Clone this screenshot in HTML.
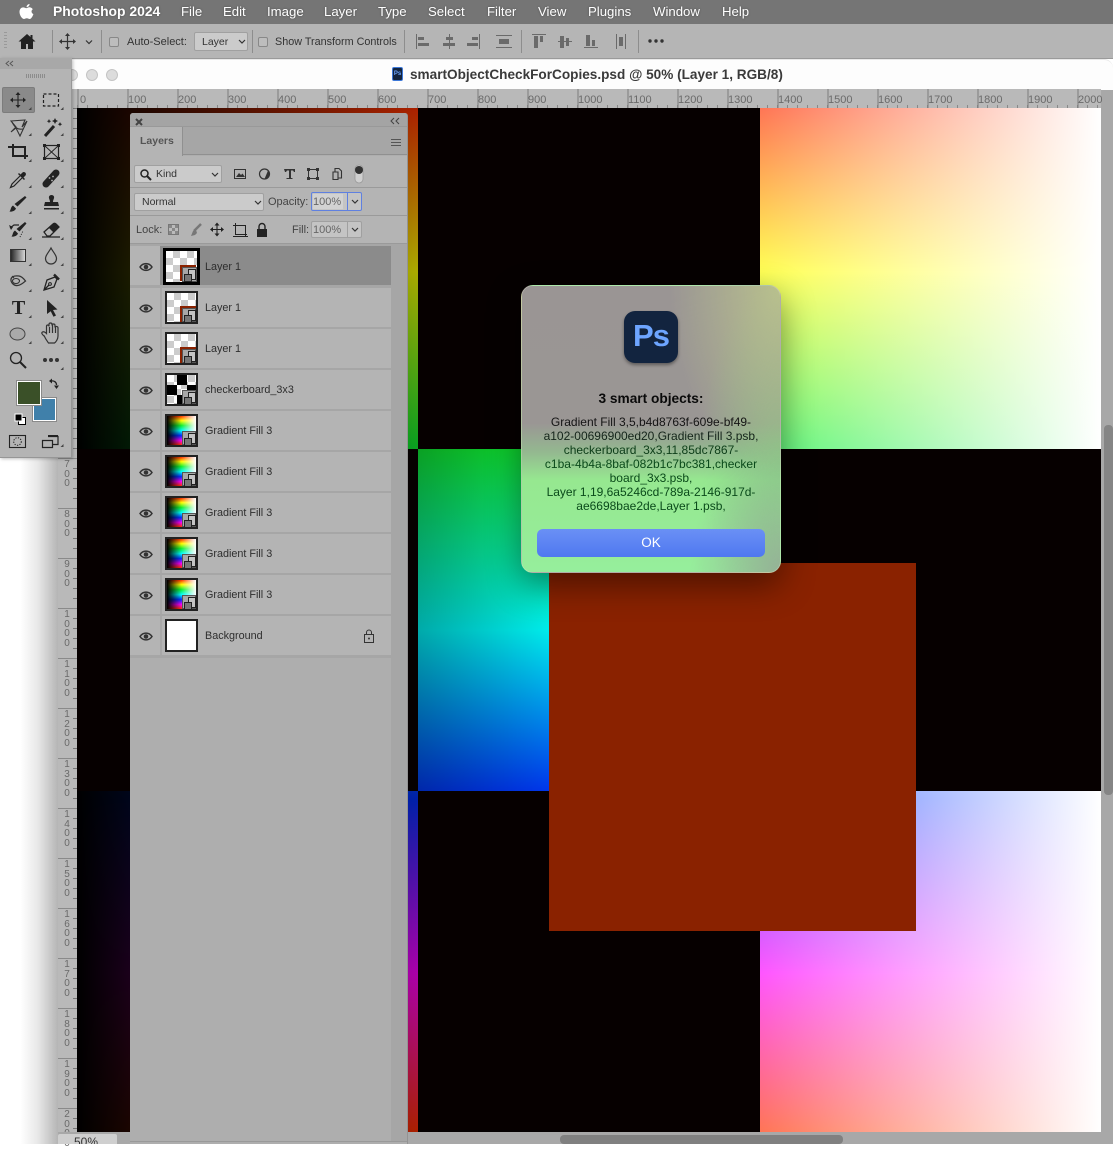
<!DOCTYPE html>
<html><head><meta charset="utf-8"><style>
*{box-sizing:border-box}
html,body{margin:0;padding:0;width:1113px;height:1144px;overflow:hidden;background:#fff;font-family:"Liberation Sans",sans-serif}
.a{position:absolute}
.m{position:absolute;top:4px;font-size:13.2px;line-height:15px;color:#fff;text-shadow:0 0 2px rgba(0,0,0,.35);white-space:nowrap}
.t{position:absolute;font-size:11px;line-height:12px;color:#333;white-space:nowrap}
.sep{position:absolute;top:30px;width:1px;height:23px;background:#8d8d8d}
.cb{position:absolute;width:10px;height:10px;border:1px solid #888;border-radius:2px;background:#bdbdbd}
.sel{position:absolute;background:#cbcbcb;border:1px solid #a0a0a0;border-radius:2px;font-size:10.5px;color:#333;white-space:nowrap}
.rt{position:absolute;top:94px;font-size:11px;line-height:13px;color:#6a6a6a;white-space:nowrap}
.rl{position:absolute;left:62px;width:10px;font-size:10px;line-height:9.7px;color:#6a6a6a;text-align:center;white-space:normal}
.mt{position:absolute;left:58px;width:19px;height:1px;background:#8a8a8a}
.row{position:absolute;left:130px;width:261px;height:39px;background:#b4b4b4}
.rsep{position:absolute;left:160px;width:2px;height:39px;background:#a8a8a8}
.th{position:absolute;left:165px;width:33px;height:33px;border:2px solid #222;overflow:hidden;background-color:#fff}
.ck{background-image:conic-gradient(#ccc 25%,#fff 0 50%,#ccc 0 75%,#fff 0);background-size:14px 14px}
.gr{background:linear-gradient(90deg,#000,rgba(0,0,0,0) 50%,rgba(255,255,255,0) 50%,#fff),linear-gradient(180deg,#ff3000,#ff0 16%,#10f030 33%,#0ff 51%,#0030ff 67.5%,#f0f 84.5%,#ff3000)}
.rd{position:absolute;left:13px;top:13px;width:16px;height:16px;background:#8a2200}
.bd{position:absolute;left:15px;top:15px;width:14px;height:14px;background:#a8a8a8;border:1px solid #555}
.bd:before{content:"";position:absolute;left:5px;top:1px;width:6px;height:9px;border:1px solid #222;background:#c4c4c4}
.bd:after{content:"";position:absolute;left:1px;top:6px;width:6px;height:6px;border:1px solid #222;background:#777}
.nm{position:absolute;left:205px;font-size:10.8px;line-height:12px;color:#2e2e2e;white-space:nowrap}
.dl{text-align:center;white-space:nowrap;font-size:12px;line-height:14px;height:14px}
</style></head><body>

<!-- left white area -->
<div class="a" style="left:0;top:458px;width:58px;height:686px;background:linear-gradient(90deg,#fff 0,#fff 35%,#e8e8e8 65%,#b5b5b5 100%)"></div>

<!-- canvas -->
<div class="a" style="left:77px;top:108px;width:1024px;height:1024px;background:linear-gradient(90deg,#000,rgba(0,0,0,0) 50%,rgba(255,255,255,0) 50%,#fff),linear-gradient(180deg,#ff3000,#ff0 16%,#10f030 33%,#0ff 51%,#0030ff 67.5%,#f0f 84.5%,#ff3000)"></div>
<div class="a" style="left:418px;top:108px;width:342px;height:341px;background:#060000"></div>
<div class="a" style="left:77px;top:449px;width:341px;height:342px;background:#060000"></div>
<div class="a" style="left:760px;top:449px;width:341px;height:342px;background:#060000"></div>
<div class="a" style="left:418px;top:791px;width:342px;height:341px;background:#060000"></div>
<div class="a" style="left:549px;top:563px;width:367px;height:368px;background:#8a2200"></div>

<!-- left ruler -->
<div class="a" style="left:58px;top:108px;width:19px;height:1024px;background-color:#b9b9b9;background-image:repeating-linear-gradient(180deg,#777 0,#777 1px,transparent 1px,transparent 10px);background-size:4px 100%;background-repeat:no-repeat;background-position:right top"></div>
<div class="mt" style="top:458px"></div><div class="mt" style="top:508px"></div><div class="mt" style="top:558px"></div><div class="mt" style="top:608px"></div><div class="mt" style="top:658px"></div><div class="mt" style="top:708px"></div><div class="mt" style="top:758px"></div><div class="mt" style="top:808px"></div><div class="mt" style="top:858px"></div><div class="mt" style="top:908px"></div><div class="mt" style="top:958px"></div><div class="mt" style="top:1008px"></div><div class="mt" style="top:1058px"></div><div class="mt" style="top:1108px"></div>
<div class="rl" style="top:460px">7<br>0<br>0</div>
<div class="rl" style="top:510px">8<br>0<br>0</div>
<div class="rl" style="top:560px">9<br>0<br>0</div>
<div class="rl" style="top:610px">1<br>0<br>0<br>0</div>
<div class="rl" style="top:660px">1<br>1<br>0<br>0</div>
<div class="rl" style="top:710px">1<br>2<br>0<br>0</div>
<div class="rl" style="top:760px">1<br>3<br>0<br>0</div>
<div class="rl" style="top:810px">1<br>4<br>0<br>0</div>
<div class="rl" style="top:860px">1<br>5<br>0<br>0</div>
<div class="rl" style="top:910px">1<br>6<br>0<br>0</div>
<div class="rl" style="top:960px">1<br>7<br>0<br>0</div>
<div class="rl" style="top:1010px">1<br>8<br>0<br>0</div>
<div class="rl" style="top:1060px">1<br>9<br>0<br>0</div>
<div class="rl" style="top:1110px">2<br>0<br>0<br>0</div>

<!-- scrollbars -->
<div class="a" style="left:1101px;top:90px;width:12px;height:1054px;background:#a8a8a8"></div>
<div class="a" style="left:1104px;top:425px;width:9px;height:370px;background:#858585;border-radius:4px"></div>
<div class="a" style="left:58px;top:1132px;width:1055px;height:12px;background:#a8a8a8"></div>
<div class="a" style="left:560px;top:1135px;width:283px;height:9px;background:#808080;border-radius:4px"></div>
<div class="a" style="left:58px;top:1134px;width:59px;height:10px;background:#cfcfcf;border-radius:2px 2px 0 0;overflow:hidden"><div class="a" style="left:16px;top:1px;font-size:12px;line-height:14px;color:#333">50%</div></div>

<!-- title bar -->
<div class="a" style="left:57px;top:59px;width:1056px;height:31px;background:#fdfdfd;border-top:1px solid #e8e8e8;border-radius:0 9px 0 0"></div>
<div class="a" style="left:66px;top:69px;width:12px;height:12px;border-radius:50%;background:#dcdcdc;border:1px solid #c4c4c4"></div>
<div class="a" style="left:86px;top:69px;width:12px;height:12px;border-radius:50%;background:#dcdcdc;border:1px solid #c4c4c4"></div>
<div class="a" style="left:106px;top:69px;width:12px;height:12px;border-radius:50%;background:#dcdcdc;border:1px solid #c4c4c4"></div>
<div class="a" style="left:392px;top:67px;width:11px;height:14px;background:#12243f;border:1px solid #3d78d8;border-radius:2px;color:#6da5ff;font-size:6px;line-height:12px;font-weight:bold;text-align:center">Ps</div>
<div class="a" style="left:410px;top:67px;font-size:13.6px;line-height:16px;font-weight:bold;color:#3a3a3a;white-space:nowrap">smartObjectCheckForCopies.psd @ 50% (Layer 1, RGB/8)</div>

<!-- top ruler -->
<div class="a" style="left:57px;top:89px;width:1044px;height:19px;background-color:#b9b9b9;background-image:repeating-linear-gradient(90deg,#888 0,#888 1px,transparent 1px,transparent 10px);background-size:100% 3px;background-repeat:no-repeat;background-position:20px bottom"></div>
<svg class="a" style="left:57px;top:89px" width="1044" height="19"><path stroke="#7d7d7d" stroke-width="1" d="M21 0V19M71 0V19M121 0V19M171 0V19M221 0V19M271 0V19M321 0V19M371 0V19M421 0V19M471 0V19M521 0V19M571 0V19M621 0V19M671 0V19M721 0V19M771 0V19M821 0V19M871 0V19M921 0V19M971 0V19M1021 0V19"/></svg>
<span class="rt" style="left:80px">0</span><span class="rt" style="left:128px">100</span><span class="rt" style="left:178px">200</span><span class="rt" style="left:228px">300</span><span class="rt" style="left:278px">400</span><span class="rt" style="left:328px">500</span><span class="rt" style="left:378px">600</span><span class="rt" style="left:428px">700</span><span class="rt" style="left:478px">800</span><span class="rt" style="left:528px">900</span><span class="rt" style="left:578px">1000</span><span class="rt" style="left:628px">1100</span><span class="rt" style="left:678px">1200</span><span class="rt" style="left:728px">1300</span><span class="rt" style="left:778px">1400</span><span class="rt" style="left:828px">1500</span><span class="rt" style="left:878px">1600</span><span class="rt" style="left:928px">1700</span><span class="rt" style="left:978px">1800</span><span class="rt" style="left:1028px">1900</span><span class="rt" style="left:1078px">2000</span>

<!-- menu bar -->
<div class="a" style="left:0;top:0;width:1113px;height:24px;background:#757575"></div>
<svg class="a" style="left:18px;top:3px" width="17" height="18" viewBox="0 0 17 18"><path fill="#fff" d="M11.6 1c.1 1.300-1.200 3.200-3 3.100C8.400 2.600 9.900 1 11.600 1zM14.800 6.300c-1.900 1.200-1.600 3.900.6 4.800-.5 1.500-2 4.900-3.800 4.900-1 0-1.500-.7-2.800-.7s-1.900.7-2.900.7C3.900 16 1.500 12 1.500 8.900c0-2.900 1.900-4.500 3.700-4.500 1.200 0 2.200.8 3 .8s1.900-.9 3.300-.9c1 0 2.300.5 3.300 2z"/></svg>
<div class="m" style="left:53px;font-weight:bold;font-size:13.9px">Photoshop 2024</div>
<div class="m" style="left:181px">File</div><div class="m" style="left:223px">Edit</div><div class="m" style="left:267px">Image</div><div class="m" style="left:324px">Layer</div><div class="m" style="left:378px">Type</div><div class="m" style="left:428px">Select</div><div class="m" style="left:487px">Filter</div><div class="m" style="left:538px">View</div><div class="m" style="left:588px">Plugins</div><div class="m" style="left:653px">Window</div><div class="m" style="left:722px">Help</div>

<!-- options bar -->
<div class="a" style="left:0;top:24px;width:1113px;height:35px;background:#b5b5b5;border-bottom:1px solid #9a9a9a"></div>
<svg class="a" style="left:0;top:24px" width="1113" height="35" viewBox="0 24 1113 35">
<path fill="#222" d="M27 34l-8.500 7.500h2.500V49h5v-5h2v5h5v-7.500h2.500l-3-2.700V35h-2v2z"/>
<path fill="none" stroke="#333" stroke-width="1.200" d="M60 41.500H75M67.500 34V49"/><path fill="#333" d="M67.500 33l-2.500 3h5zM67.500 50l-2.500-3h5zM59 41.500l3-2.500v5zM76 41.500l-3-2.500v5z"/>
<path fill="none" stroke="#333" stroke-width="1.200" d="M86 40.500l3 3 3-3"/>
<g fill="#999"><rect x="4" y="32" width="3" height="1"/><rect x="4" y="35" width="3" height="1"/><rect x="4" y="38" width="3" height="1"/><rect x="4" y="41" width="3" height="1"/><rect x="4" y="44" width="3" height="1"/><rect x="4" y="47" width="3" height="1"/></g>
<g fill="#6a6a6a">
<rect x="416" y="34" width="1" height="15"/><rect x="418" y="37" width="6" height="3"/><rect x="418" y="43" width="11" height="3"/>
<rect x="449" y="34" width="1" height="15"/><rect x="446" y="37" width="7" height="3"/><rect x="443" y="43" width="12" height="3"/>
<rect x="479" y="34" width="1" height="15"/><rect x="472" y="37" width="6" height="3"/><rect x="467" y="43" width="11" height="3"/>
<rect x="496" y="35" width="16" height="1"/><rect x="496" y="47" width="16" height="1"/><rect x="499" y="39" width="10" height="5"/>
<rect x="532" y="34" width="14" height="1"/><rect x="534" y="36" width="4" height="12"/><rect x="540" y="36" width="3" height="6"/>
<rect x="558" y="41" width="14" height="1"/><rect x="560" y="36" width="4" height="12"/><rect x="566" y="38" width="3" height="8"/>
<rect x="584" y="47" width="14" height="1"/><rect x="586" y="35" width="4" height="11"/><rect x="592" y="40" width="3" height="6"/>
<rect x="616" y="34" width="1" height="15"/><rect x="625" y="34" width="1" height="15"/><rect x="619" y="37" width="4" height="9"/>
</g>
<g fill="#333"><circle cx="650" cy="41" r="1.700"/><circle cx="656" cy="41" r="1.700"/><circle cx="662" cy="41" r="1.700"/></g>
</svg>
<div class="sep" style="left:52px"></div><div class="sep" style="left:101px"></div><div class="sep" style="left:252px"></div><div class="sep" style="left:404px"></div><div class="sep" style="left:521px"></div><div class="sep" style="left:638px"></div>
<div class="cb" style="left:109px;top:37px"></div>
<div class="t" style="left:127px;top:36px">Auto-Select:</div>
<div class="sel" style="left:194px;top:32px;width:54px;height:19px;padding:3px 0 0 7px;line-height:12px">Layer<svg class="a" style="left:43px;top:6px" width="8" height="6"><path fill="none" stroke="#333" stroke-width="1.200" d="M1 1l3 3 3-3"/></svg></div>
<div class="cb" style="left:258px;top:37px"></div>
<div class="t" style="left:275px;top:36px;font-size:10.8px">Show Transform Controls</div>

<!-- layers panel -->
<div class="a" style="left:130px;top:113px;width:278px;height:1031px;background:#aeaeae;border-right:1px solid #939393;border-radius:3px 3px 0 0"></div>
<div class="a" style="left:130px;top:1141px;width:277px;height:1px;background:#999"></div>
<div class="a" style="left:130px;top:113px;width:277px;height:14px;background:#a4a4a4;border-radius:3px 3px 0 0;border-bottom:1px solid #999"></div>
<div class="a" style="left:130px;top:127px;width:277px;height:28px;background:#a6a6a6;border-bottom:1px solid #909090"></div>
<div class="a" style="left:130px;top:127px;width:53px;height:29px;background:#b4b4b4;border-right:1px solid #909090"></div>
<div class="a" style="left:140px;top:135px;font-size:10.5px;line-height:13px;font-weight:bold;color:#555">Layers</div>
<svg class="a" style="left:130px;top:113px" width="277" height="43"><path stroke="#444" stroke-width="2" d="M6 6l6 6M12 6l-6 6"/><path fill="none" stroke="#444" stroke-width="1" d="M264 5l-3 3 3 3M269 5l-3 3 3 3"/><path stroke="#555" d="M261 26.500h10M261 29.500h10M261 32.500h10"/></svg>
<div class="a" style="left:130px;top:156px;width:277px;height:32px;background:#b4b4b4;border-bottom:1px solid #9a9a9a"></div>
<div class="a" style="left:130px;top:188px;width:277px;height:28px;background:#b4b4b4;border-bottom:1px solid #9a9a9a"></div>
<div class="a" style="left:130px;top:216px;width:277px;height:28px;background:#b4b4b4;border-bottom:1px solid #9a9a9a"></div>
<div class="a" style="left:391px;top:244px;width:16px;height:897px;background:#a6a6a6"></div>
<div class="a" style="left:130px;top:244px;width:261px;height:414px;background:#a6a6a6"></div>

<div class="sel" style="left:134px;top:165px;width:88px;height:18px;line-height:17px;padding-left:21px;font-size:10.5px">Kind<svg class="a" style="left:4px;top:2px" width="14" height="13"><circle cx="5.500" cy="5.500" r="3.500" fill="none" stroke="#222" stroke-width="1.500"/><path stroke="#222" stroke-width="2" d="M8 8l4 4"/></svg><svg class="a" style="left:76px;top:6px" width="8" height="6"><path fill="none" stroke="#333" stroke-width="1.200" d="M1 1l3 3 3-3"/></svg></div>
<svg class="a" style="left:230px;top:163px" width="140" height="24">
<rect x="4.500" y="6.500" width="11" height="9" fill="none" stroke="#333"/><path fill="#333" d="M6 14l3-4 2 2 1.500-1.500L15 14z"/>
<circle cx="34.500" cy="11" r="5" fill="none" stroke="#333" stroke-width="1.200"/><path fill="#333" d="M34.500 16a5 5 0 0 0 3.500-8.500z"/>
<path fill="#333" d="M54 6h11v3h-1l-1-1.500h-2V15h1.500v1h-6v-1H59V7.500h-2L56 9h-1z"/>
<rect x="78.500" y="6.500" width="9" height="9" fill="none" stroke="#333"/><g fill="#333"><rect x="77" y="5" width="3" height="3"/><rect x="86" y="5" width="3" height="3"/><rect x="77" y="14" width="3" height="3"/><rect x="86" y="14" width="3" height="3"/></g>
<path fill="none" stroke="#333" stroke-width="1.100" d="M105 9V5.500h4l2.500 2.500v7H108M103 9h5v7.500h-5z"/>
<rect x="125" y="2" width="8" height="18" rx="4" fill="#d0d0d0" stroke="#999" stroke-width=".8"/><circle cx="129" cy="7" r="4" fill="#333"/>
</svg>

<div class="sel" style="left:134px;top:193px;width:130px;height:18px;line-height:16px;padding-left:7px;font-size:10.5px">Normal<svg class="a" style="left:119px;top:6px" width="8" height="6"><path fill="none" stroke="#333" stroke-width="1.200" d="M1 1l3 3 3-3"/></svg></div>
<div class="t" style="left:268px;top:196px;color:#444">Opacity:</div>
<div class="a" style="left:311px;top:192px;width:51px;height:19px;border:1px solid #5f80e0;border-radius:2px;background:#c4c4c4"></div>
<div class="a" style="left:313px;top:194px;width:30px;height:15px;background:#d2d2d2;font-size:11px;line-height:16px;color:#666;white-space:nowrap">100%</div>
<div class="a" style="left:347px;top:192px;width:1px;height:19px;background:#5f80e0"></div>
<svg class="a" style="left:351px;top:199px" width="8" height="6"><path fill="none" stroke="#333" stroke-width="1.200" d="M1 1l3 3 3-3"/></svg>

<div class="t" style="left:136px;top:224px;color:#444">Lock:</div>
<svg class="a" style="left:165px;top:220px" width="110" height="20">
<rect x="3.500" y="4.500" width="10" height="10" fill="#bbb" stroke="#777"/><path fill="#888" d="M4 5h3v3H4zM10 5h3v3h-3zM7 8h3v3H7zM4 11h3v3H4zM10 11h3v3h-3z"/>
<path stroke="#777" stroke-width="2.500" d="M36 4l-7 7"/><path fill="#777" d="M31 10l-3 1-2 5 4-1 2-2z"/>
<g transform="translate(52,9.500)"><path fill="none" stroke="#222" stroke-width="1.100" d="M-6 0H6M0-6V6"/><path fill="#222" d="M0-7l-2.500 3h5zM0 7l-2.500-3h5zM-7 0l3-2.500v5zM7 0l-3-2.500v5z"/></g>
<rect x="70.500" y="5.500" width="10" height="9" fill="none" stroke="#222"/><path stroke="#222" stroke-dasharray="2 1.500" d="M68 5.500h3M80 14.500h3M70.500 3v3M80.500 14v3"/><path stroke="#222" d="M68 16.500h15"/>
<path fill="#222" d="M92 9h10v8H92z"/><path fill="none" stroke="#222" stroke-width="1.400" d="M94 9V6.500a3 3 0 0 1 6 0V9"/>
</svg>
<div class="t" style="left:292px;top:224px;color:#444">Fill:</div>
<div class="a" style="left:311px;top:221px;width:51px;height:17px;border:1px solid #a0a0a0;border-radius:2px;background:#c4c4c4"></div>
<div class="a" style="left:313px;top:224px;font-size:11px;line-height:13px;color:#666">100%</div>
<div class="a" style="left:347px;top:221px;width:1px;height:17px;background:#a0a0a0"></div>
<svg class="a" style="left:351px;top:227px" width="8" height="6"><path fill="none" stroke="#333" stroke-width="1.200" d="M1 1l3 3 3-3"/></svg>

<!-- rows -->
<div class="row" style="top:246px;background:#8b8b8b"></div>
<div class="a" style="left:130px;top:246px;width:30px;height:39px;background:#b4b4b4"></div>
<div class="row" style="top:288px;height:39px"></div><div class="row" style="top:329px"></div><div class="row" style="top:370px"></div><div class="row" style="top:411px"></div><div class="row" style="top:452px"></div><div class="row" style="top:493px"></div><div class="row" style="top:534px"></div><div class="row" style="top:575px"></div><div class="row" style="top:616px"></div>
<div class="rsep" style="top:288px"></div><div class="rsep" style="top:329px"></div><div class="rsep" style="top:370px"></div><div class="rsep" style="top:411px"></div><div class="rsep" style="top:452px"></div><div class="rsep" style="top:493px"></div><div class="rsep" style="top:534px"></div><div class="rsep" style="top:575px"></div><div class="rsep" style="top:616px"></div>

<svg class="a" style="left:130px;top:246px" width="32" height="420">
<defs><g id="eye"><path fill="none" stroke="#333" stroke-width="1.500" d="M-6 0C-3-4.500 3-4.500 6 0 3 4.500-3 4.500-6 0z"/><circle r="2.300" fill="#333"/></g></defs>
<use href="#eye" x="16" y="21"/><use href="#eye" x="16" y="62.500"/><use href="#eye" x="16" y="103.500"/><use href="#eye" x="16" y="144.500"/><use href="#eye" x="16" y="185.500"/><use href="#eye" x="16" y="226.500"/><use href="#eye" x="16" y="267.500"/><use href="#eye" x="16" y="308.500"/><use href="#eye" x="16" y="349.500"/><use href="#eye" x="16" y="390.500"/>
</svg>

<div class="th ck" style="left:163px;top:248px;width:37px;height:37px;border:3px solid #000"><div class="rd" style="left:14px;top:14px"></div><div class="bd" style="left:16px;top:16px;width:15px;height:15px"></div></div>
<div class="th ck" style="top:291px"><div class="rd"></div><div class="bd"></div></div>
<div class="th ck" style="top:332px"><div class="rd"></div><div class="bd"></div></div>
<div class="th ck" style="top:373px"><div class="a" style="left:10px;top:0;width:10px;height:10px;background:#000"></div><div class="a" style="left:0;top:10px;width:10px;height:10px;background:#000"></div><div class="a" style="left:20px;top:10px;width:10px;height:10px;background:#000"></div><div class="a" style="left:10px;top:20px;width:10px;height:10px;background:#000"></div><div class="bd"></div></div>
<div class="th gr" style="top:414px"><div class="bd"></div></div>
<div class="th gr" style="top:455px"><div class="bd"></div></div>
<div class="th gr" style="top:496px"><div class="bd"></div></div>
<div class="th gr" style="top:537px"><div class="bd"></div></div>
<div class="th gr" style="top:578px"><div class="bd"></div></div>
<div class="th" style="top:619px"></div>

<div class="nm" style="top:261px">Layer 1</div><div class="nm" style="top:302px">Layer 1</div><div class="nm" style="top:343px">Layer 1</div><div class="nm" style="top:384px">checkerboard_3x3</div><div class="nm" style="top:425px">Gradient Fill 3</div><div class="nm" style="top:466px">Gradient Fill 3</div><div class="nm" style="top:507px">Gradient Fill 3</div><div class="nm" style="top:548px">Gradient Fill 3</div><div class="nm" style="top:589px">Gradient Fill 3</div><div class="nm" style="top:630px">Background</div>
<svg class="a" style="left:362px;top:629px" width="14" height="15"><rect x="2.500" y="5.500" width="9" height="8" fill="none" stroke="#333"/><path fill="none" stroke="#333" d="M4.500 5.500V3.500a2.500 2.500 0 0 1 5 0v2"/><circle cx="7" cy="9.500" r="1" fill="#333"/></svg>

<!-- toolbox -->
<div class="a" style="left:0;top:58px;width:72px;height:400px;background:#b4b4b4;border-right:1px solid #969696;border-bottom:1px solid #969696;box-shadow:1px 1px 3px rgba(0,0,0,.25)"></div>
<div class="a" style="left:0;top:58px;width:72px;height:11px;background:#a8a8a8"></div>
<div class="a" style="left:2px;top:87px;width:33px;height:26px;background:#8a8a8a;border:1px solid #7c7c7c;border-radius:2px"></div>
<svg class="a" style="left:0;top:58px" width="72" height="400" viewBox="0 58 72 400">
<path fill="none" stroke="#555" stroke-width=".9" d="M9 61l-3 2.500L9 66M13 61l-3 2.500L13 66"/>
<path stroke="#8c8c8c" stroke-width="4" stroke-dasharray="1 1" d="M26 76h19"/>
<g fill="#444" transform="translate(-1.500,-2)"><path d="M33 112v-3l-3 3zM65 112v-3l-3 3zM33 138v-3l-3 3zM65 138v-3l-3 3zM33 164v-3l-3 3zM65 164v-3l-3 3zM33 190v-3l-3 3zM65 190v-3l-3 3zM33 216v-3l-3 3zM65 216v-3l-3 3zM33 242v-3l-3 3zM65 242v-3l-3 3zM33 268v-3l-3 3zM65 268v-3l-3 3zM33 294v-3l-3 3zM65 294v-3l-3 3zM33 320v-3l-3 3zM65 320v-3l-3 3zM33 346v-3l-3 3zM65 346v-3l-3 3zM65 372v-3l-3 3zM65 449v-3l-3 3z"/></g>
<!-- move -->
<path fill="none" stroke="#222" stroke-width="1.100" d="M11 100H25M18 93V107"/><path fill="#222" d="M18 92l-2.500 3h5zM18 108l-2.500-3h5zM10 100l3-2.500v5zM26 100l-3-2.500v5z"/>
<!-- marquee -->
<rect x="43.500" y="94" width="15" height="12" fill="none" stroke="#222" stroke-width="1.200" stroke-dasharray="3 2"/>
<!-- lasso -->
<path fill="none" stroke="#333" stroke-width="1.100" d="M11 121l14-1-3 7 5-6-7 15-4-8-5 4 5-5z"/><path fill="none" stroke="#333" stroke-width="1.100" d="M12 122c3 6 6 8 11 7"/>
<!-- wand -->
<path stroke="#222" stroke-width="3" d="M45 136l9-10"/><path fill="#222" d="M55 118l1 2 2 1-2 1-1 2-1-2-2-1 2-1zM60 122l.7 1.500 1.500.7-1.500.7-.7 1.500-.7-1.500-1.500-.7 1.500-.7zM49 119l.7 1.500 1.500.7-1.500.7-.7 1.500-.7-1.500-1.500-.7 1.500-.7z"/>
<!-- crop -->
<path fill="none" stroke="#222" stroke-width="2" d="M8 147h17v12M13 144v12h15"/>
<!-- frame -->
<rect x="44.500" y="145.500" width="14" height="13" fill="none" stroke="#222" stroke-width="1.200"/><path stroke="#222" stroke-width=".9" d="M44.500 145.500l14 13M58.500 145.500l-14 13"/><g fill="#222"><rect x="43" y="144" width="3" height="3"/><rect x="57" y="144" width="3" height="3"/><rect x="43" y="157" width="3" height="3"/><rect x="57" y="157" width="3" height="3"/></g>
<!-- eyedropper -->
<path fill="none" stroke="#222" stroke-width="1.200" d="M20 176l-8 8-1.500 3.500 3.500-1.500 8-8"/><path fill="#222" d="M18 174l6 6 1-1-1.500-1.500 2-2c1.500-2-1-4.500-3-3l-2 2-1.500-1.500z"/>
<!-- bandage -->
<path stroke="#222" stroke-width="7" stroke-linecap="round" d="M46 184l10-11"/><g fill="#b4b4b4"><circle cx="49.500" cy="178" r=".9"/><circle cx="52" cy="180.500" r=".9"/><circle cx="53" cy="176.500" r=".9"/></g>
<!-- brush -->
<path fill="#222" d="M25 196l1.500 1.500-9 9-3-2.500zM13 205.500l3 3c-1 2.500-4 3.500-6.500 3 1.500-1.500 1-4.500 3.500-6z"/>
<!-- stamp -->
<path fill="#222" d="M49 196.500a2.800 2.800 0 0 1 5 0c.5 2-1 3-1 5.500h5l1 4H44l1-4h5c0-2.500-1.500-3.500-1-5.500zM44 208h15v1.500H44z"/>
<!-- history brush -->
<path fill="#222" d="M25 222l1.500 1.500-7 8-3-2.500zM15 230.500l3 3c-1 2.500-4 3.500-6.500 3 1.500-1.500 1-4.500 3.500-6z"/><path fill="none" stroke="#222" stroke-width="1.200" d="M10 228l4-3h5"/><path fill="#222" d="M9 225l2 5 2-3z"/><path stroke="#222" stroke-dasharray="1 1.500" d="M20 237l3-6"/>
<!-- eraser -->
<path fill="none" stroke="#222" stroke-width="1.300" d="M44 232l9-8c1-1 2-1 3 0l3 3-9 9h-3zM42 237h18"/><path fill="#222" d="M49 228l4.500 4.500 5.500-5.500-3-3c-1-1-2-1-3 0z"/>
<!-- gradient -->
<defs><linearGradient id="tg"><stop offset="0" stop-color="#222"/><stop offset="1" stop-color="#ddd"/></linearGradient></defs>
<rect x="10.500" y="249.500" width="15" height="12" fill="url(#tg)" stroke="#333"/>
<!-- drop -->
<path fill="none" stroke="#333" stroke-width="1.200" d="M51 248c-2 4-5.500 7-5.500 10.500a5.500 5.500 0 0 0 11 0c0-3.500-3.500-6.500-5.500-10.500z"/>
<!-- smudge/spot -->
<path fill="none" stroke="#333" stroke-width="1.300" d="M11 279c1-3 4-3.500 8-3 3 .5 5 3 6.500 5-2 1.500-4 4-8 4.500-3.500.5-7-3-6.500-6.500z"/><ellipse cx="16" cy="281" rx="3.500" ry="2.500" fill="none" stroke="#333" stroke-width="1.100"/><path stroke="#333" d="M12 276l2 2"/>
<!-- pen -->
<path fill="none" stroke="#222" stroke-width="1.300" d="M55 277l-8 3-3 10 10-3 3-8zM44 290l5-5"/><circle cx="50" cy="284" r="1.400" fill="none" stroke="#222"/><path stroke="#222" stroke-width="2.400" d="M54 274.500l5 5"/>
<!-- T -->
<text x="18.500" y="314" text-anchor="middle" font-family="Liberation Serif" font-weight="bold" font-size="20" fill="#222">T</text>
<!-- arrow -->
<path fill="#222" d="M47 300l10.500 9.500-4.500.5 3 5.500-2.500 1.200-2.800-5.500L47 314z"/>
<!-- ellipse -->
<ellipse cx="17.500" cy="334" rx="7.500" ry="6" fill="#aaa" stroke="#444"/>
<!-- hand -->
<path fill="none" stroke="#333" stroke-width="1.200" d="M44 336c-2-2-3-3-1.500-4 1.500-1 3 .5 4 1.500v-7c0-2 2.500-2 2.500 0v-2c0-2 3-2 3 0v1c0-2 3-2 3 0v2c0-1.500 3-1.500 3 .5v8c0 3-2 6-3.500 7h-6c-1-1.500-2.500-3-4.500-7.500zM49.500 327v6M52.500 325v8M55.500 326v7"/>
<!-- zoom -->
<circle cx="16" cy="358" r="5.500" fill="none" stroke="#222" stroke-width="1.300"/><path stroke="#222" stroke-width="2" d="M20 362l6 6"/>
<!-- dots -->
<g fill="#333"><circle cx="45" cy="360" r="2"/><circle cx="51" cy="360" r="2"/><circle cx="57" cy="360" r="2"/></g>
<!-- swap -->
<path fill="none" stroke="#222" stroke-width="1.300" d="M51 381c3-.5 5.500 1 5.500 4"/><path fill="#222" d="M49 381l3-2.500v5zM56.500 389l-2.500-3.500h5z"/>
<!-- default colours -->
<rect x="18.500" y="417.500" width="7" height="7" fill="#fff" stroke="#000"/><rect x="15" y="414" width="7" height="7" fill="#000" stroke="#fff"/>
<!-- quick mask -->
<rect x="9.500" y="435.500" width="16" height="12" fill="none" stroke="#222" stroke-width="1.100"/><circle cx="17.500" cy="441.500" r="3.800" fill="none" stroke="#222" stroke-dasharray="1.300 1.300"/>
<!-- screen mode -->
<path fill="none" stroke="#222" stroke-width="1.200" d="M48 436.500h10v8h-5M42.500 440.500h10v7h-10z"/><path stroke="#222" stroke-width="2" d="M48 436h10"/>
</svg>
<div class="a" style="left:32px;top:397px;width:25px;height:25px;background:#4080aa;border:1px solid #8a8a8a;box-shadow:inset 0 0 0 1px #fff"></div>
<div class="a" style="left:16px;top:380px;width:26px;height:26px;background:#3a5028;border:1px solid #8a8a8a;box-shadow:inset 0 0 0 1px #fff"></div>

<!-- dialog -->
<div class="a" style="left:521px;top:285px;width:260px;height:288px;border-radius:12px;overflow:hidden;border:1px solid rgba(220,220,200,.35);box-shadow:0 12px 34px rgba(0,0,0,.45);background:radial-gradient(110px 190px at 100% 0%,rgba(190,200,140,.85),rgba(190,200,140,0)),radial-gradient(90px 130px at 100% 100%,rgba(150,165,150,.8),rgba(150,165,150,0)),radial-gradient(80px 180px at 100% 60%,rgba(130,200,130,.6),rgba(130,200,130,0)),linear-gradient(180deg,#9a9594 0,#9a9694 48%,#94b890 58%,#96e890 68%,#96ee9c 100%)">
<div class="a" style="left:102px;top:25px;width:54px;height:52px;background:#12243f;border-radius:11px;box-shadow:0 2px 3px rgba(0,0,0,.4);color:#6da5ff;font-size:31px;letter-spacing:-1px;line-height:50px;font-weight:bold;text-align:center">Ps</div>
<div class="a" style="left:0;top:105px;width:258px;text-align:center;font-size:13.7px;line-height:15px;font-weight:bold;color:#0a0a0a;white-space:nowrap">3 smart objects:</div>
<div class="a" style="left:0;top:129px;width:258px">
<div class="dl" style="color:#141414">Gradient Fill 3,5,b4d8763f-609e-bf49-</div>
<div class="dl" style="color:#14241a">a102-00696900ed20,Gradient Fill 3.psb,</div>
<div class="dl" style="color:#0c3d18">checkerboard_3x3,11,85dc7867-</div>
<div class="dl" style="color:#0a4a1a">c1ba-4b4a-8baf-082b1c7bc381,checker</div>
<div class="dl" style="color:#0a4a1a">board_3x3.psb,</div>
<div class="dl" style="color:#0a4a1a">Layer 1,19,6a5246cd-789a-2146-917d-</div>
<div class="dl" style="color:#0a4a1a">ae6698bae2de,Layer 1.psb,</div>
</div>
<div class="a" style="left:15px;top:243px;width:228px;height:28px;border-radius:6px;background:linear-gradient(180deg,#6a90f5,#4f78f0);color:#fff;font-size:13.5px;line-height:27px;text-align:center">OK</div>
</div>
</body></html>
